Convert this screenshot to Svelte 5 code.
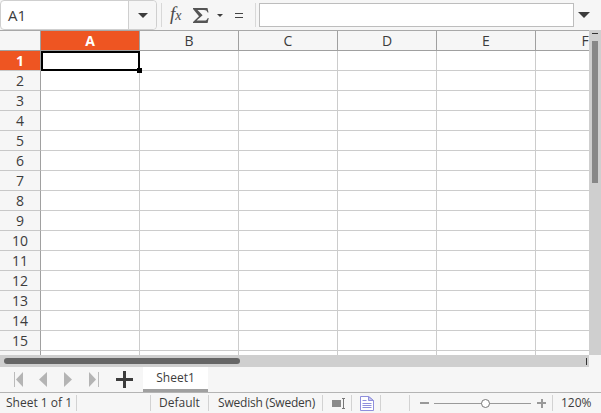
<script lang="ts">
  const columns = ["A", "B", "C", "D", "E", "F"];
  const rows = Array.from({ length: 16 }, (_, i) => i + 1);
</script>

<div class="calc">
  <div class="formula-bar">
    <div class="name-box">
      <span class="name-value">A1</span>
      <span class="name-drop"><i class="caret name"></i></span>
    </div>
    <span class="sep first"></span>
    <div class="formula-tools">
      <span class="fx">f<small>x</small></span>
      <svg class="sigma" width="16" height="15" viewBox="0 0 16 15">
        <path d="M0 0H14.5L15.5 4.5H14.6C14 2.8 13 2 11 2H4.5L9.6 7.2L3.6 12.6H11.5C13 12.6 14.2 11.6 14.8 10H15.7L14.6 15H0V14.1L6 8.2L0 1Z" fill="#555" />
      </svg>
      <i class="caret tiny"></i>
      <span class="equals"></span>
    </div>
    <span class="sep second"></span>
    <div class="formula-input"></div>
    <span class="input-drop"><i class="caret big"></i></span>
  </div>

  <div class="sheet">
    <div class="grid">
      <div class="row head">
        <div class="row-head corner"></div>
        {#each columns as col, c}
          <div class="col-head" class:active={c === 0}>{col}</div>
        {/each}
      </div>
      {#each rows as row}
        <div class="row">
          <div class="row-head" class:active={row === 1}>{row === 16 ? "" : row}</div>
          {#each columns as col, c}
            <div class="cell" class:selected={row === 1 && c === 0}>
              {#if row === 1 && c === 0}<span class="handle"></span>{/if}
            </div>
          {/each}
        </div>
      {/each}
    </div>
    <div class="vscroll">
      <span class="vscroll-split"></span>
      <span class="vscroll-thumb"></span>
    </div>
  </div>

  <div class="hscroll">
    <span class="hscroll-thumb"></span>
    <span class="hscroll-split"></span>
  </div>

  <div class="tabs">
    <div class="tab-nav">
      <svg width="10" height="15" viewBox="0 0 10 15"><path d="M0.5 0V15" stroke="#bbb" /><path d="M9 0V15L2 7.5Z" fill="#b4b4b4" /></svg>
      <svg width="8" height="15" viewBox="0 0 8 15"><path d="M8 0V15L0 7.5Z" fill="#b4b4b4" /></svg>
      <svg width="8" height="15" viewBox="0 0 8 15"><path d="M0 0V15L8 7.5Z" fill="#b4b4b4" /></svg>
      <svg width="10" height="15" viewBox="0 0 10 15"><path d="M9.5 0V15" stroke="#bbb" /><path d="M0 0V15L7 7.5Z" fill="#b4b4b4" /></svg>
    </div>
    <svg class="add" width="17" height="17" viewBox="0 0 17 17"><path d="M0 7H17V10H0ZM7 0H10V17H7Z" fill="#3c3c3c" /></svg>
    <div class="tab">Sheet1</div>
  </div>

  <div class="status">
    <span class="st st-sheet">Sheet 1 of 1</span>
    <span class="st st-blank"></span>
    <span class="st st-style">Default</span>
    <span class="st st-lang">Swedish (Sweden)</span>
    <span class="st st-mode">
      <svg width="13" height="11" viewBox="0 0 13 11"><path d="M0 2H9V9H0Z" fill="#8a8a8a" /><path d="M10 0.5H13M10 10.5H13M11.5 0.5V10.5" stroke="#777" fill="none" /></svg>
    </span>
    <span class="st st-doc">
      <svg width="14" height="15" viewBox="0 0 14 15">
        <path d="M0.5 0.5H8.5L13.5 4.5V14.5H0.5Z" fill="#fff" stroke="#8f8fdc" />
        <path d="M8.5 0.5V4.5H13.5Z" fill="#c9c9ef" stroke="#8f8fdc" />
        <path d="M2.5 4.5H6.5M2.5 7.5H11.5M2.5 9.5H11.5M2.5 11.5H11.5" stroke="#8f8fdc" />
      </svg>
    </span>
    <span class="st st-sign"></span>
    <span class="st st-zoom">
      <span class="zoom-minus"></span>
      <span class="zoom-track"><span class="zoom-knob"></span></span>
      <span class="zoom-plus"></span>
    </span>
    <span class="st st-pct">120%</span>
  </div>
</div>

<style>
  :global(body) {
    margin: 0;
    background: #f6f6f6;
  }

  .calc {
    width: 601px;
    height: 413px;
    display: flex;
    flex-direction: column;
    overflow: hidden;
    font-family: "Open Sans", "Noto Sans", sans-serif;
    font-size: 12px;
    color: #3c3c3c;
    background: #f6f6f6;
  }

  .formula-bar {
    height: 30px;
    flex: none;
    display: flex;
    align-items: center;
    box-sizing: border-box;
  }

  .name-box {
    width: 157px;
    height: 30px;
    box-sizing: border-box;
    display: flex;
    background: #fff;
    border: 1px solid #cfcfcf;
    border-radius: 4px;
  }

  .name-value {
    width: 128px;
    box-sizing: border-box;
    padding-left: 7px;
    line-height: 28px;
    font-size: 15px;
    border-right: 1px solid #cfcfcf;
  }

  .name-drop {
    flex: 1;
    display: flex;
    align-items: center;
    justify-content: center;
    background: #f6f6f6;
    border-radius: 0 4px 4px 0;
  }

  .caret {
    display: block;
    width: 0;
    height: 0;
    border-style: solid;
    border-color: #3c3c3c transparent transparent;
  }

  .caret.name {
    border-width: 5px 5px 0;
  }

  .caret.big {
    border-width: 6px 6px 0;
  }

  .caret.tiny {
    border-width: 3px 3px 0;
    margin-left: 8px;
  }

  .sep {
    width: 1px;
    height: 24px;
    background: #d8d8d8;
  }

  .sep.first {
    margin: 0 4px;
  }

  .sep.second {
    margin-right: 3px;
  }

  .formula-tools {
    width: 89px;
    display: flex;
    align-items: center;
    padding-left: 4px;
    box-sizing: border-box;
  }

  .fx {
    font-family: "Liberation Serif", serif;
    font-style: italic;
    font-size: 19px;
    width: 22px;
    line-height: 24px;
    color: #4a4a4a;
  }

  .fx small {
    font-size: 14px;
  }

  .sigma {
    margin-left: 1px;
  }

  .equals {
    width: 8px;
    height: 5px;
    margin-left: 12px;
    box-sizing: border-box;
    border-top: 1px solid #444;
    border-bottom: 1px solid #444;
  }

  .formula-input {
    width: 315px;
    height: 24px;
    box-sizing: border-box;
    background: #fff;
    border: 1px solid #bdbdbd;
  }

  .input-drop {
    flex: 1;
    display: flex;
    justify-content: center;
    padding-right: 7px;
  }

  .sheet {
    height: 325px;
    flex: none;
    display: flex;
    background: #fff;
  }

  .grid {
    width: 589px;
    overflow: hidden;
    border-top: 1px solid #a8a8a8;
    box-sizing: border-box;
  }

  .row {
    display: flex;
    height: 20px;
    width: 700px;
  }

  .row.head {
    height: 20px;
  }

  .row-head {
    width: 41px;
    flex: none;
    box-sizing: border-box;
    text-align: center;
    line-height: 19px;
    font-size: 14px;
    background: #f6f6f6;
    border-right: 1px solid #a0a0a0;
    border-bottom: 1px solid #c8c8c8;
  }

  .row-head.active {
    background: #ee5522;
    color: #fff;
    font-weight: 700;
  }

  .corner {
    border-bottom: 1px solid #a0a0a0;
  }

  .col-head {
    width: 99px;
    flex: none;
    box-sizing: border-box;
    text-align: center;
    line-height: 19px;
    font-size: 14px;
    background: #f6f6f6;
    border-right: 1px solid #a0a0a0;
    border-bottom: 1px solid #a0a0a0;
  }

  .col-head.active {
    background: #ee5522;
    color: #fff;
    font-weight: 700;
  }

  .cell {
    width: 99px;
    flex: none;
    box-sizing: border-box;
    position: relative;
    background: #fff;
    border-right: 1px solid #cccccc;
    border-bottom: 1px solid #cccccc;
  }

  .cell.selected {
    border: 2px solid #000;
    z-index: 2;
  }

  .handle {
    position: absolute;
    right: -4px;
    bottom: -4px;
    width: 5px;
    height: 5px;
    background: #000;
  }

  .vscroll {
    width: 12px;
    flex: none;
    box-sizing: border-box;
    background: #cfcfcf;
    padding: 0 3px;
    display: flex;
    flex-direction: column;
  }

  .vscroll-split {
    height: 1px;
    width: 6px;
    margin-top: 3px;
    background: #333;
  }

  .vscroll-thumb {
    height: 142px;
    margin-top: 7px;
    background: #878787;
  }

  .hscroll {
    height: 12px;
    flex: none;
    display: flex;
    align-items: center;
    justify-content: space-between;
    width: 589px;
    padding: 0 4px;
    box-sizing: border-box;
    background: #cfcfcf;
  }

  .hscroll-thumb {
    width: 236px;
    height: 6px;
    border-radius: 3px;
    background: #666;
  }

  .hscroll-split {
    width: 1px;
    height: 7px;
    margin-right: -2px;
    background: #333;
  }

  .tabs {
    height: 26px;
    flex: none;
    display: flex;
    align-items: flex-start;
    box-sizing: border-box;
    border-bottom: 1px solid #b4b4b4;
  }

  .tab-nav {
    width: 116px;
    box-sizing: border-box;
    padding: 5px 0 0 14px;
    display: flex;
    gap: 15px;
  }

  .tab-nav svg:nth-child(n + 3) {
    margin-left: 2px;
  }

  .add {
    margin-top: 4px;
  }

  .tab {
    width: 65px;
    height: 25px;
    box-sizing: border-box;
    margin-left: 10px;
    text-align: center;
    line-height: 22px;
    background: #fff;
    border-bottom: 3px solid #a0a0a0;
  }

  .status {
    height: 20px;
    flex: none;
    display: flex;
    align-items: center;
  }

  .st {
    height: 16px;
    box-sizing: border-box;
    flex: none;
    line-height: 16px;
    white-space: nowrap;
    border-right: 1px solid #d2d2d2;
    display: flex;
    align-items: center;
  }

  .st-sheet {
    width: 77px;
    padding-left: 6px;
  }

  .st-blank {
    width: 74px;
  }

  .st-style {
    width: 58px;
    padding-left: 8px;
  }

  .st-lang {
    width: 114px;
    padding-left: 9px;
    letter-spacing: -0.2px;
  }

  .st-mode {
    width: 29px;
    padding-left: 9px;
  }

  .st-doc {
    width: 29px;
    padding-left: 8px;
  }

  .st-sign {
    width: 29px;
  }

  .st-zoom {
    width: 143px;
    padding-left: 10px;
  }

  .st-pct {
    padding-left: 8px;
    border: 0;
  }

  .zoom-minus {
    width: 9px;
    height: 2px;
    background: #999;
    flex: none;
  }

  .zoom-track {
    width: 97px;
    height: 1px;
    margin: 0 6px 0 5px;
    background: #9a9a9a;
    position: relative;
    flex: none;
  }

  .zoom-knob {
    position: absolute;
    left: 47px;
    top: -4px;
    width: 9px;
    height: 9px;
    box-sizing: border-box;
    border: 1px solid #777;
    border-radius: 50%;
    background: #fff;
  }

  .zoom-plus {
    width: 9px;
    height: 9px;
    flex: none;
    background:
      linear-gradient(#999, #999) center / 9px 2px no-repeat,
      linear-gradient(#999, #999) center / 2px 9px no-repeat;
  }
</style>
